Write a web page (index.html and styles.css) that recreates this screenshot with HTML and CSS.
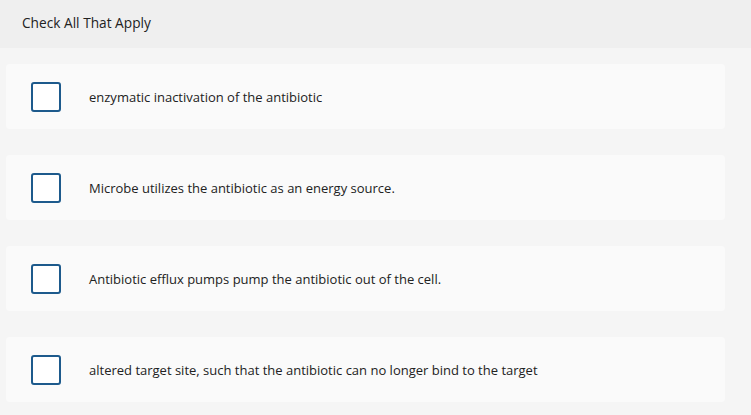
FILE: index.html
```html
<!DOCTYPE html>
<html>
<head>
<meta charset="utf-8">
<link rel="stylesheet" href="styles.css">
</head>
<body>
<div class="header">Check All That Apply</div>
<div class="list">
  <label class="card"><span class="box"></span><span class="text">enzymatic inactivation of the antibiotic</span></label>
  <label class="card"><span class="box"></span><span class="text">Microbe utilizes the antibiotic as an energy source.</span></label>
  <label class="card"><span class="box"></span><span class="text">Antibiotic efflux pumps pump the antibiotic out of the cell.</span></label>
  <label class="card"><span class="box"></span><span class="text">altered target site, such that the antibiotic can no longer bind to the target</span></label>
</div>
</body>
</html>
```
FILE: styles.css
```css
html, body {
  margin: 0;
  padding: 0;
  background: #f5f5f5;
  font-family: "Open Sans", "Liberation Sans", sans-serif;
  color: #222;
}
.header {
  height: 48px;
  box-sizing: border-box;
  background: #efefef;
  padding: 14px 0 0 22px;
  font-size: 13.7px;
  line-height: 18px;
}
.list {
  display: flex;
  flex-direction: column;
  gap: 26px;
  padding: 16px 26px 0 6px;
}
.card {
  height: 65px;
  background: #fafafa;
  border-radius: 4px;
  display: flex;
  align-items: center;
  padding-left: 25px;
  box-sizing: border-box;
}
.box {
  width: 30px;
  height: 30px;
  box-sizing: border-box;
  border: 2px solid #1d5a8c;
  border-radius: 3px;
  background: #fff;
  flex: none;
}
.text {
  margin-left: 28px;
  font-size: 13px;
  line-height: 18px;
  padding-top: 1px;
}
```
